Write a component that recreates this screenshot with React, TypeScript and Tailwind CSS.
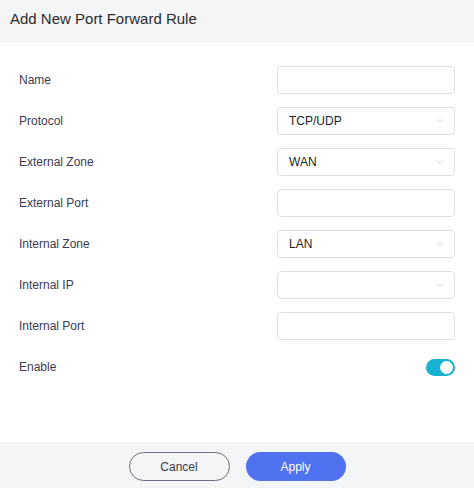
import { ChevronDown } from "lucide-react";

type Field = {
  label: string;
  kind: "input" | "select" | "toggle";
  value?: string;
};

const fields: Field[] = [
  { label: "Name", kind: "input" },
  { label: "Protocol", kind: "select", value: "TCP/UDP" },
  { label: "External Zone", kind: "select", value: "WAN" },
  { label: "External Port", kind: "input" },
  { label: "Internal Zone", kind: "select", value: "LAN" },
  { label: "Internal IP", kind: "select", value: "" },
  { label: "Internal Port", kind: "input" },
  { label: "Enable", kind: "toggle" },
];

function Control({ field }: { field: Field }) {
  if (field.kind === "toggle") {
    return (
      <div className="w-[178px] flex justify-end">
        <div className="w-[29px] h-[17px] rounded-full bg-[#17b1d1] flex items-center justify-end pr-[2px]">
          <div className="w-[13px] h-[13px] rounded-full bg-white" />
        </div>
      </div>
    );
  }
  return (
    <div className="w-[178px] h-[28px] rounded-[4px] border border-[#dcdfe6] bg-white flex items-center justify-between pl-[11px] pr-[8px]">
      <span className="text-[12px] text-[#222]">{field.value ?? ""}</span>
      {field.kind === "select" && (
        <ChevronDown className="w-[12px] h-[12px] text-[#c0c4cc]" strokeWidth={1.5} />
      )}
    </div>
  );
}

export default function App() {
  return (
    <div
      className="w-[474px] h-[488px] bg-white flex flex-col"
      style={{ fontFamily: '"Liberation Sans", Arial, sans-serif' }}
    >
      <div className="h-[42px] bg-[#f4f5f7] flex items-center px-[10px] border-b border-[#eef0f3]">
        <h1 className="text-[15px] text-[#2b2b2b] -mt-[2px]">Add New Port Forward Rule</h1>
      </div>

      <div className="flex-1 flex flex-col gap-[13px] pt-[24px] pl-[19px] pr-[19px]">
        {fields.map((f) => (
          <div key={f.label} className="h-[28px] flex items-center justify-between">
            <span className="text-[12px] text-[#3b3a4e]">{f.label}</span>
            <Control field={f} />
          </div>
        ))}
      </div>

      <div className="h-[46px] bg-[#f4f5f7] flex items-start justify-center gap-[16px] pt-[10px]">
        <button className="w-[101px] h-[29px] rounded-full border border-[#6e6e7c] text-[12px] text-[#3b3a4e]">
          Cancel
        </button>
        <button className="w-[100px] h-[29px] rounded-full bg-[#5172f0] text-[12px] text-white">
          Apply
        </button>
      </div>
    </div>
  );
}
